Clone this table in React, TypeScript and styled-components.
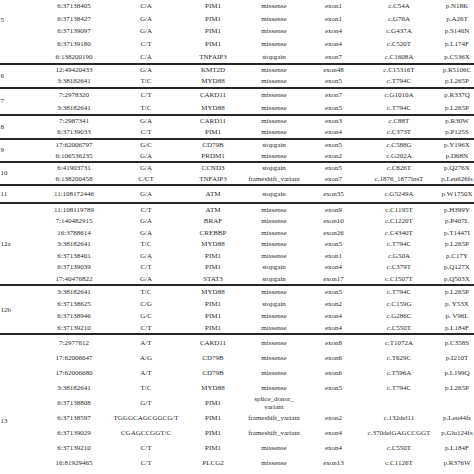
import React from "react";
import styled, { createGlobalStyle } from "styled-components";

type Row = [string, string, string, string, string, string, string];

type Group = {
    label: string;
    rowHeight: number;
    labelTop?: number;
    rows: Row[];
};

const groups: Group[] = [
    {
        label: "5",
        rowHeight: 12.6,
        labelTop: 16,
        rows: [
            ["6:37138405", "C/A", "PIM1", "missense", "exon1", "c.C54A", "p.N18K"],
            ["6:37138427", "G/A", "PIM1", "missense", "exon1", "c.G76A", "p.A26T"],
            ["6:37139097", "G/A", "PIM1", "missense", "exon4", "c.G437A", "p.S146N"],
            ["6:37139180", "C/T", "PIM1", "missense", "exon4", "c.C520T", "p.L174F"],
            ["6:138200190", "C/A", "TNFAIP3", "stopgain", "exon7", "c.C1608A", "p.C536X"],
        ],
    },
    {
        label: "6",
        rowHeight: 11,
        rows: [
            ["12:49420433", "G/A", "KMT2D", "missense", "exon48", "c.C15316T", "p.R5106C"],
            ["3:38182641", "T/C", "MYD88", "missense", "exon5", "c.T794C", "p.L265P"],
        ],
    },
    {
        label: "7",
        rowHeight: 12.5,
        rows: [
            ["7:2978320", "C/T", "CARD11", "missense", "exon7", "c.G1010A", "p.R337Q"],
            ["3:38182641", "T/C", "MYD88", "missense", "exon5", "c.T794C", "p.L265P"],
        ],
    },
    {
        label: "8",
        rowHeight: 11,
        rows: [
            ["7:2987341", "G/A", "CARD11", "missense", "exon3", "c.C88T", "p.R30W"],
            ["6:37139033", "C/T", "PIM1", "missense", "exon4", "c.C373T", "p.P125S"],
        ],
    },
    {
        label: "9",
        rowHeight: 10.5,
        rows: [
            ["17:62006797", "G/C", "CD79B", "stopgain", "exon5", "c.C588G", "p.Y196X"],
            ["6:106536235", "G/A", "PRDM1", "missense", "exon2", "c.G202A", "p.D68N"],
        ],
    },
    {
        label: "10",
        rowHeight: 10.5,
        rows: [
            ["6:41903731", "G/A", "CCND3", "stopgain", "exon5", "c.C826T", "p.Q276X"],
            ["6:138200458", "C/CT", "TNFAIP3", "frameshift_variant", "exon7", "c.1876_1877insT", "p.Leu626fs"],
        ],
    },
    {
        label: "11",
        rowHeight: 16,
        rows: [["11:108172446", "G/A", "ATM", "stopgain", "exon35", "c.G5249A", "p.W1750X"]],
    },
    {
        label: "12a",
        rowHeight: 11.5,
        rows: [
            ["11:108119789", "C/T", "ATM", "missense", "exon9", "c.C1195T", "p.H399Y"],
            ["7:140482915", "G/A", "BRAF", "missense", "exon10", "c.C1220T", "p.P407L"],
            ["16:3788614", "G/A", "CREBBP", "missense", "exon26", "c.C4340T", "p.T1447I"],
            ["3:38182641", "T/C", "MYD88", "missense", "exon5", "c.T794C", "p.L265P"],
            ["6:37138401", "G/A", "PIM1", "missense", "exon1", "c.G50A", "p.C17Y"],
            ["6:37139039", "C/T", "PIM1", "stopgain", "exon4", "c.C379T", "p.Q127X"],
            ["17:40476822", "G/A", "STAT3", "stopgain", "exon17", "c.C1507T", "p.Q503X"],
        ],
    },
    {
        label: "12b",
        rowHeight: 11.75,
        rows: [
            ["3:38182641", "T/C", "MYD88", "missense", "exon5", "c.T794C", "p.L265P"],
            ["6:37138625", "C/G", "PIM1", "stopgain", "exon2", "c.C159G", "p. Y53X"],
            ["6:37138946", "G/C", "PIM1", "missense", "exon4", "c.G286C", "p. V96L"],
            ["6:37139210", "C/T", "PIM1", "missense", "exon4", "c.C550T", "p.L184F"],
        ],
    },
    {
        label: "13",
        rowHeight: 15,
        labelTop: 82,
        rows: [
            ["7:2977612", "A/T", "CARD11", "missense", "exon8", "c.T1072A", "p.C358S"],
            ["17:62006647", "A/G", "CD79B", "missense", "exon6", "c.T629C", "p.I210T"],
            ["17:62006680", "A/T", "CD79B", "missense", "exon6", "c.T596A", "p.L199Q"],
            ["3:38182641", "T/C", "MYD88", "missense", "exon5", "c.T794C", "p.L265P"],
            ["6:37138808", "G/T", "PIM1", "splice_donor_\nvariant", "", "", ""],
            ["6:37138597", "TGGGCAGCGGCG/T", "PIM1", "frameshift_variant", "exon2", "c.132del11", "p.Leu44fs"],
            ["6:37139029", "CGAGCCGGT/C", "PIM1", "frameshift_variant", "exon4", "c.370delGAGCCGGT", "p.Glu124fs"],
            ["6:37139210", "C/T", "PIM1", "missense", "exon4", "c.C550T", "p.L184F"],
            ["16:81929465", "C/T", "PLCG2", "missense", "exon13", "c.C1126T", "p.R376W"],
        ],
    },
];

export default function App() {
    return (
        <>
            <GlobalStyle />
            <Page>
                {groups.map((group, gi) => (
                    <GroupBlock key={group.label} $first={gi === 0} $rowHeight={group.rowHeight}>
                        <Label $span={group.rows.length} $top={group.labelTop}>
                            {group.label}
                        </Label>
                        {group.rows.map((row, ri) =>
                            row.map((cell, ci) => (
                                <Cell key={`${ri}-${ci}`} $wrap={cell.includes("\n")}>
                                    {cell}
                                </Cell>
                            ))
                        )}
                    </GroupBlock>
                ))}
            </Page>
        </>
    );
}

const GlobalStyle = createGlobalStyle`
    html, body {
        margin: 0;
        padding: 0;
        overflow: hidden;
        background: #ffffff;
    }
`;

const Page = styled.div`
    width: 474px;
    height: 474px;
    overflow: hidden;
    font-family: "Liberation Serif", "Times New Roman", serif;
    font-size: 7px;
    color: #2b2b2b;
`;

const GroupBlock = styled.div<{ $first: boolean; $rowHeight: number }>`
    display: grid;
    grid-template-columns: 40px 68px 76px 58px 64px 55px 76px 40px;
    grid-auto-rows: ${(p) => p.$rowHeight}px;
    width: 477px;
    border-top: ${(p) => (p.$first ? "none" : "2px solid #262626")};
`;

const Label = styled.div<{ $span: number; $top?: number }>`
    grid-column: 1;
    grid-row: 1 / span ${(p) => p.$span};
    display: flex;
    align-items: ${(p) => (p.$top === undefined ? "center" : "flex-start")};
    padding-top: ${(p) => p.$top ?? 0}px;
    padding-left: 0.5px;
    line-height: 8px;
    white-space: nowrap;
`;

const Cell = styled.div<{ $wrap: boolean }>`
    display: flex;
    align-items: center;
    justify-content: center;
    text-align: center;
    white-space: ${(p) => (p.$wrap ? "pre-line" : "nowrap")};
    line-height: 8px;
    min-width: 0;
`;
